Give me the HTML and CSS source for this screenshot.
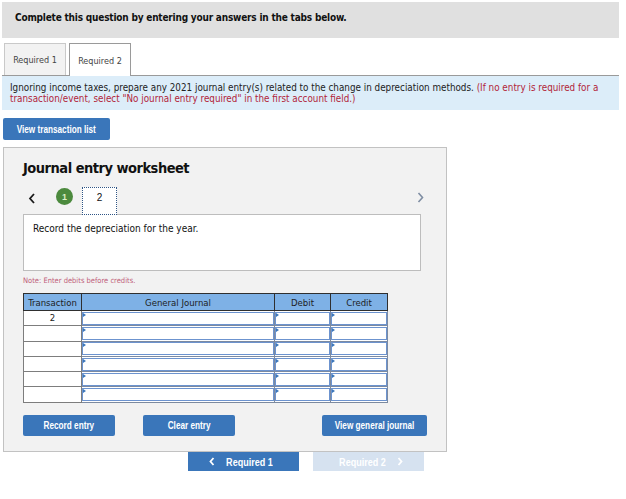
FILE: index.html
```html
<!DOCTYPE html>
<html>
<head>
<meta charset="utf-8">
<link rel="stylesheet" href="styles.css">
</head>
<body>
<div class="page">
  <div class="qhead">Complete this question by entering your answers in the tabs below.</div>
  <div class="tabs">
    <div class="tab">Required 1</div>
    <div class="tab active">Required 2</div>
  </div>
  <div class="info">Ignoring income taxes, prepare any 2021 journal entry(s) related to the change in depreciation methods. <span class="red">(If no entry is required for a transaction/event, select "No journal entry required" in the first account field.)</span></div>
  <button class="btn btn-list"><span class="nt">View transaction list</span></button>
  <div class="panel">
    <div class="title">Journal entry worksheet</div>
    <div class="nav">
      <svg class="prev" width="8" height="11" viewBox="0 0 8 11"><polyline points="6,1 2,5.5 6,10" fill="none" stroke="#1a1a1a" stroke-width="1.8"/></svg>
      <div class="step done">1</div>
      <div class="step cur">2</div>
      <svg class="next" width="7" height="11" viewBox="0 0 7 11"><polyline points="1.5,1 5.5,5.5 1.5,10" fill="none" stroke="#7f8ea3" stroke-width="1.6"/></svg>
    </div>
    <div class="desc">Record the depreciation for the year.</div>
    <div class="note">Note: Enter debits before credits.</div>
    <table class="jt">
      <thead>
        <tr><th class="c1">Transaction</th><th class="c2">General Journal</th><th class="c3">Debit</th><th class="c4">Credit</th></tr>
      </thead>
      <tbody>
        <tr><td class="tx">2</td><td class="in"><div class="fld"></div></td><td class="in"><div class="fld"></div></td><td class="in"><div class="fld"></div></td></tr>
        <tr><td class="tx"></td><td class="in"><div class="fld"></div></td><td class="in"><div class="fld"></div></td><td class="in"><div class="fld"></div></td></tr>
        <tr><td class="tx"></td><td class="in"><div class="fld"></div></td><td class="in"><div class="fld"></div></td><td class="in"><div class="fld"></div></td></tr>
        <tr><td class="tx"></td><td class="in"><div class="fld"></div></td><td class="in"><div class="fld"></div></td><td class="in"><div class="fld"></div></td></tr>
        <tr><td class="tx"></td><td class="in"><div class="fld"></div></td><td class="in"><div class="fld"></div></td><td class="in"><div class="fld"></div></td></tr>
        <tr><td class="tx"></td><td class="in"><div class="fld"></div></td><td class="in"><div class="fld"></div></td><td class="in"><div class="fld"></div></td></tr>
      </tbody>
    </table>
    <div class="actions">
      <button class="btn btn-rec"><span class="nt">Record entry</span></button>
      <button class="btn btn-clear"><span class="nt">Clear entry</span></button>
      <button class="btn btn-view"><span class="nt">View general journal</span></button>
    </div>
  </div>
  <div class="bottom">
    <button class="nbtn prevreq"><svg width="6" height="9" viewBox="0 0 6 9"><polyline points="4.5,1 1.5,4.5 4.5,8" fill="none" stroke="#fff" stroke-width="1.8"/></svg><span class="nt">Required 1</span></button>
    <button class="nbtn nextreq"><span class="nt">Required 2</span><svg width="6" height="9" viewBox="0 0 6 9"><polyline points="1.5,1 4.5,4.5 1.5,8" fill="none" stroke="#fff" stroke-width="1.8"/></svg></button>
  </div>
</div>
</body>
</html>
```

FILE: styles.css
```css
* { box-sizing: border-box; }
body { margin: 0; background: #fff; font-family: "DejaVu Sans Condensed", "DejaVu Sans", sans-serif; font-stretch: condensed; color: #1a1a1a; }
.page { width: 626px; padding: 2px 0 0 2px; }
.qhead { width: 617px; height: 36px; background: #e0e0e0; font-weight: bold; font-size: 10px; letter-spacing: -0.2px; padding: 10px 0 0 13px; color: #111; }
.tabs { display: flex; gap: 3px; width: 617px; margin-top: 5px; padding-left: 2px; border-bottom: 1px solid #9a9a9a; height: 33px; }
.tab { width: 62px; height: 32px; background: #f2f2f2; border: 1px solid #c9c9c9; border-bottom: none; font-size: 9px; color: #444; display: flex; align-items: center; justify-content: center; padding-top: 1px; }
.tab.active { background: #fff; border-color: #9a9a9a; height: 33px; }
.info { width: 617px; height: 34px; background: #dcedf9; font-size: 9.8px; line-height: 11px; padding: 6px 2px 0 8px; color: #222; }
.red { color: #b21f3a; }
.btn { border: none; border-radius: 2px; background: #3a76ba; color: #fff; font-family: "Liberation Sans", sans-serif; font-weight: bold; font-size: 10px; padding: 0; cursor: pointer; white-space: nowrap; }
.nt { display: inline-block; transform: scaleX(0.82); }
.btn-list { display: block; margin: 8px 0 0 1px; width: 107px; height: 22px; }
.panel { width: 444px; margin: 7px 0 0 1px; height: 305px; background: #f2f2f2; border: 1px solid #c2c2c2; padding: 12px 0 0 19px; }
.title { font-weight: bold; font-size: 14.5px; line-height: 17px; letter-spacing: -0.5px; color: #111; }
.nav { display: flex; align-items: flex-start; width: 398px; height: 27px; margin-top: 10px; position: relative; z-index: 1; }
.prev { margin: 6px 0 0 5px; }
.step { font-family: "Liberation Sans", sans-serif; font-size: 10px; }
.step.done { width: 17px; height: 17px; border-radius: 50%; background: #4c8a3e; color: #dcefc8; font-weight: bold; font-size: 9px; display: flex; align-items: center; justify-content: center; margin: 1px 0 0 20px; }
.step.cur { width: 35px; height: 28px; background: #fff; border: 1px dotted #2f5585; margin-left: 9px; text-align: center; padding-top: 4px; color: #111; }
.next { margin: 5px -3px 0 auto; }
.desc { width: 398px; height: 57px; background: #fff; border: 1px solid #bdbdbd; font-size: 10px; padding: 8px 0 0 9px; color: #111; }
.note { font-size: 7.5px; color: #c0607a; margin-top: 5px; line-height: 10px; }
.jt { border-collapse: collapse; margin-top: 7px; width: 364px; table-layout: fixed; }
.jt th { background: #7eb1e6; border: 1px solid #2f2f2f; height: 17px; font-size: 9.5px; font-weight: normal; color: #1d1d1d; padding: 0; }
.c1 { width: 58px; } .c2 { width: 193px; } .c3 { width: 56px; } .c4 { width: 57px; }
.jt td { height: 15.3px; border: 1px solid #7d7d7d; padding: 0; background: #fff; }
.jt td.tx { text-align: center; font-size: 9.5px; line-height: 13px; vertical-align: top; }
.jt td.in { border-color: #7c8aa0; }
.fld { height: 13px; border: 1px solid #6c93cf; position: relative; }
.fld::before { content: ""; position: absolute; left: 0; top: 0; border-left: 3px solid #3a76ba; border-top: 2px solid transparent; border-bottom: 2px solid transparent; }
.actions { display: flex; margin-top: 12px; width: 404px; }
.actions .btn { height: 21px; }
.btn-rec { width: 92px; }
.btn-clear { width: 92px; margin-left: 28px; }
.btn-view { width: 105px; margin-left: auto; }
.bottom { display: flex; gap: 14px; padding-left: 186px; }
.nbtn { width: 111px; height: 19px; border: none; color: #fff; font-family: "Liberation Sans", sans-serif; font-weight: bold; font-size: 11px; display: flex; align-items: center; justify-content: center; gap: 6px; padding: 0; white-space: nowrap; }
.prevreq { background: #3a76ba; }
.nextreq { background: #d6e2f0; }
```
